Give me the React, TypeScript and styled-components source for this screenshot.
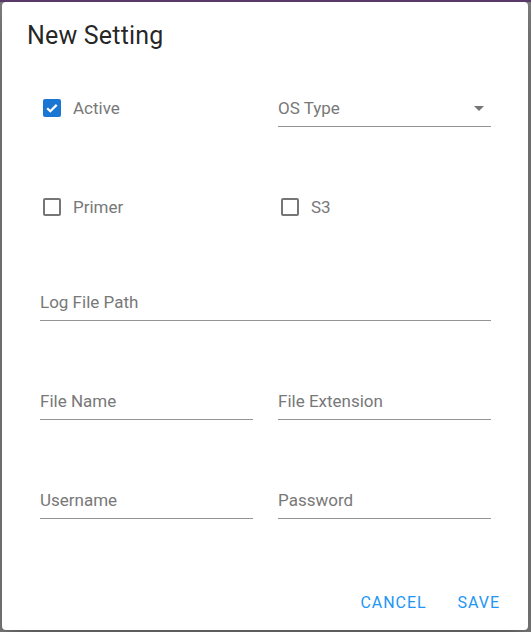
import React from "react";
import styled, { createGlobalStyle } from "styled-components";

const GlobalStyle = createGlobalStyle`
  html, body {
    margin: 0;
    padding: 0;
  }
  body {
    font-family: Roboto, "Liberation Sans", Arial, sans-serif;
  }
  * { box-sizing: border-box; }
`;

const Backdrop = styled.div`
  min-height: 632px;
  padding: 2px 3px 2px 2px;
  background: linear-gradient(#5b3a6b 0 2px, #7b7b7b 2px);
`;

const Dialog = styled.div`
  height: 628px;
  background: #fff;
  border-radius: 4px;
  display: flex;
  flex-direction: column;
  box-shadow: 0 11px 15px -7px rgba(0,0,0,0.2), 0 24px 38px 3px rgba(0,0,0,0.14);
`;

const Title = styled.h2`
  margin: 0;
  padding: 18px 25px 0;
  font-size: 25px;
  line-height: 32px;
  font-weight: 400;
  letter-spacing: 0.0075em;
  color: rgba(0, 0, 0, 0.87);
`;

const Content = styled.div`
  padding: 32px 37px 0 38px;
  display: flex;
  flex-direction: column;
`;

const Row = styled.div<{ $height: number }>`
  display: grid;
  grid-template-columns: 1fr 1fr;
  column-gap: 25px;
  height: ${(p) => p.$height}px;
  align-items: start;
`;

const TextField = styled.div<{ $span?: boolean }>`
  grid-column: ${(p) => (p.$span ? "1 / -1" : "auto")};
  display: flex;
  align-items: center;
  padding: 14px 0 8px;
  border-bottom: 1px solid rgba(0, 0, 0, 0.42);
`;

const Label = styled.span`
  flex: 1;
  font-size: 17px;
  line-height: 20px;
  color: #787878;
`;

const Arrow = styled.svg`
  width: 24px;
  height: 24px;
  margin: -2px 0;
  fill: #757575;
`;

const CheckField = styled.label`
  display: flex;
  align-items: center;
  gap: 12px;
  padding: 14px 0 0 3px;
`;

const Box = styled.span<{ $checked?: boolean }>`
  width: 18px;
  height: 18px;
  border-radius: 2px;
  display: flex;
  align-items: center;
  justify-content: center;
  background: ${(p) => (p.$checked ? "#1976d2" : "transparent")};
  border: ${(p) => (p.$checked ? "none" : "2px solid #767676")};
`;

const Actions = styled.div`
  margin-top: auto;
  display: flex;
  justify-content: flex-end;
  gap: 15px;
  padding: 8px 20px 9px;
`;

const Button = styled.button`
  background: none;
  border: none;
  padding: 6px 8px;
  font-family: Roboto, "Liberation Sans", Arial, sans-serif;
  font-size: 16px;
  line-height: 24px;
  font-weight: 400;
  letter-spacing: 0.06em;
  text-transform: uppercase;
  color: #2196f3;
  cursor: pointer;
`;

function Check({ label, checked }: { label: string; checked?: boolean }) {
  return (
    <CheckField>
      <Box $checked={checked}>
        {checked && (
          <svg width="14" height="14" viewBox="0 0 14 14">
            <path d="M2.2 7.2l3.1 3.1 6.4-6.4" fill="none" stroke="#fff" strokeWidth="2.2" />
          </svg>
        )}
      </Box>
      <Label>{label}</Label>
    </CheckField>
  );
}

export default function App() {
  return (
    <>
      <GlobalStyle />
      <Backdrop>
        <Dialog>
          <Title>New Setting</Title>
          <Content>
            <Row $height={99}>
              <Check label="Active" checked />
              <TextField>
                <Label>OS Type</Label>
                <Arrow viewBox="0 0 24 24">
                  <path d="M7 10l5 5 5-5z" />
                </Arrow>
              </TextField>
            </Row>
            <Row $height={95}>
              <Check label="Primer" />
              <Check label="S3" />
            </Row>
            <Row $height={99}>
              <TextField $span>
                <Label>Log File Path</Label>
              </TextField>
            </Row>
            <Row $height={99}>
              <TextField>
                <Label>File Name</Label>
              </TextField>
              <TextField>
                <Label>File Extension</Label>
              </TextField>
            </Row>
            <Row $height={60}>
              <TextField>
                <Label>Username</Label>
              </TextField>
              <TextField>
                <Label>Password</Label>
              </TextField>
            </Row>
          </Content>
          <Actions>
            <Button>Cancel</Button>
            <Button>Save</Button>
          </Actions>
        </Dialog>
      </Backdrop>
    </>
  );
}
